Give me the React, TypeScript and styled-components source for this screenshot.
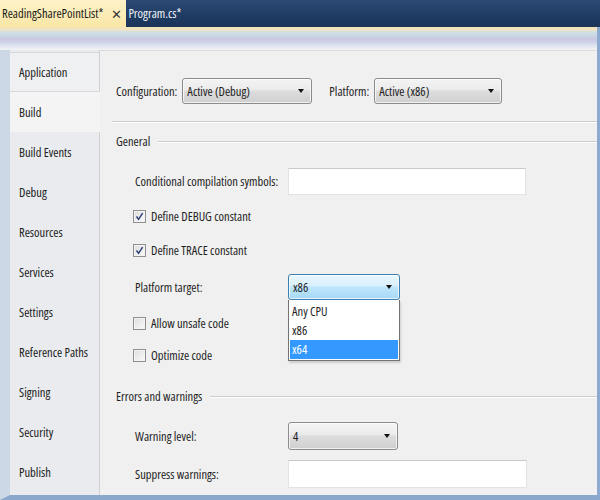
import React from "react";
import styled, { createGlobalStyle } from "styled-components";

const Global = createGlobalStyle`
  html, body { margin: 0; padding: 0; }
  body { width: 600px; height: 500px; overflow: hidden; background: #f0f0f0; }
  * { box-sizing: border-box; }
`;

const Root = styled.div`
  width: 600px;
  height: 500px;
  display: flex;
  flex-direction: column;
  font-family: "Open Sans", "Liberation Sans", sans-serif;
  font-stretch: 84%;
  font-size: 12.5px;
  color: #1e1e1e;
  background: #f0f0f0;
`;

const TabBar = styled.div`
  height: 27px;
  display: flex;
  align-items: stretch;
  background: linear-gradient(#2b4a74, #1f3b62 60%, #1b3458);
  flex: none;
`;

const DocTab = styled.div<{ $active?: boolean }>`
  display: flex;
  align-items: center;
  gap: 6px;
  padding: 0 ${(p) => (p.$active ? "4px" : "6px")} 0 2px;
  background: ${(p) => (p.$active ? "linear-gradient(#fdf2c9, #f9e6a6)" : "transparent")};
  color: ${(p) => (p.$active ? "#1a1a1a" : "#f2f4f8")};
  font-size: 12.5px;
  white-space: nowrap;
`;

const Close = styled.span`
  font-size: 13px;
  color: #3a3a3a;
  margin-left: 2px;
`;

const Strip = styled.div`
  height: 23px;
  flex: none;
  background: linear-gradient(
    #f2e3b8 0px,
    #efe3c4 3px,
    #cfdfe2 5px,
    #c9d6e4 9px,
    #cac6e2 12px,
    #cfd6ea 16px,
    #dfe6ef 19px,
    #e9edf2 21px,
    #f4f4f4 23px
  );
  border-right: 3px solid #8daad0;
`;

const Body = styled.div`
  flex: 1;
  display: flex;
  min-height: 0;
  border-left: 10px solid #cdd8e6;
  border-right: 3px solid #8daad0;
  border-bottom: 5px solid #8aa7cc;
`;

const Nav = styled.div`
  width: 90px;
  flex: none;
  background: #e9ebee;
  border-right: 1px solid #cfd1d4;
  display: flex;
  flex-direction: column;
  padding-top: 2px;
`;

const NavItem = styled.div<{ $selected?: boolean; $boxed?: boolean }>`
  height: 40px;
  display: flex;
  align-items: center;
  padding-left: 9px;
  color: #222;
  background: ${(p) => (p.$selected ? "#f4f4f4" : p.$boxed ? "#eff0f1" : "transparent")};
  border-top: 1px solid ${(p) => (p.$boxed ? "#d6d8db" : "transparent")};
  border-bottom: 1px solid ${(p) => (p.$boxed ? "#d6d8db" : "transparent")};
  margin-right: ${(p) => (p.$selected ? "-1px" : "0")};
`;

const Content = styled.div`
  flex: 1;
  display: flex;
  flex-direction: column;
  background: #f0f0f0;
  padding-top: 2px;
  border-top: 1px solid #dcdcdc;
`;

const TopRow = styled.div`
  display: flex;
  align-items: center;
  height: 26px;
  margin-top: 25px;
  padding-left: 16px;
`;

const TopLabel = styled.span<{ $ml?: number }>`
  margin-right: 5px;
  margin-left: ${(p) => p.$ml ?? 0}px;
`;

const Select = styled.div<{ $w: number; $focus?: boolean; $h?: number }>`
  position: relative;
  width: ${(p) => p.$w}px;
  height: ${(p) => p.$h ?? 26}px;
  border: 1px solid ${(p) => (p.$focus ? "#3c7fb1" : "#8b8b8b")};
  border-radius: 3px;
  background: ${(p) =>
    p.$focus
      ? "linear-gradient(#eaf6fd 0%, #d9f0fc 45%, #bee6fd 50%, #a7d9f5 100%)"
      : "linear-gradient(#f4f4f4 0%, #ebebeb 45%, #dddddd 50%, #cfcfcf 100%)"};
  display: flex;
  align-items: center;
  padding-left: 4px;
  box-shadow: inset 0 0 0 1px rgba(255, 255, 255, 0.7);
`;

const Arrow = styled.span`
  position: absolute;
  right: 7px;
  top: 50%;
  margin-top: -2px;
  width: 0;
  height: 0;
  border-left: 3.5px solid transparent;
  border-right: 3.5px solid transparent;
  border-top: 4px solid #111;
`;

const Separator = styled.div<{ $mt: number }>`
  height: 2px;
  margin-top: ${(p) => p.$mt}px;
  margin-left: 12px;
  border-top: 1px solid #cdcdcd;
  border-bottom: 1px solid #ffffff;
`;

const Header = styled.div<{ $mt: number }>`
  display: flex;
  align-items: center;
  height: 20px;
  margin-top: ${(p) => p.$mt}px;
  padding-left: 16px;
  gap: 8px;
`;

const HeaderLine = styled.div`
  flex: 1;
  height: 2px;
  border-top: 1px solid #cdcdcd;
  border-bottom: 1px solid #ffffff;
  margin-top: 1px;
`;

const Row = styled.div<{ $mt: number; $h: number }>`
  position: relative;
  display: flex;
  align-items: center;
  height: ${(p) => p.$h}px;
  margin-top: ${(p) => p.$mt}px;
  padding-left: 35px;
`;

const Label = styled.span`
  width: 153px;
  flex: none;
`;

const TextInput = styled.div<{ $w: number; $h: number }>`
  width: ${(p) => p.$w}px;
  height: ${(p) => p.$h}px;
  background: #ffffff;
  border: 1px solid #e2e3e4;
  border-top-color: #c9c9c9;
`;

const Box = styled.span`
  width: 13px;
  height: 13px;
  margin-left: -2px;
  margin-right: 5px;
  border: 1px solid #8e8f8f;
  background: linear-gradient(135deg, #dcdcdc, #fbfbfb);
  display: inline-flex;
  align-items: center;
  justify-content: center;
  flex: none;
  box-shadow: inset 0 0 0 1px #f4f4f4;
`;

const List = styled.div`
  position: absolute;
  left: 188px;
  top: 100%;
  width: 112px;
  background: #ffffff;
  border: 1px solid #737373;
  border-top: none;
  padding: 2px 1px 1px;
  z-index: 2;
  box-shadow: 1px 2px 2px rgba(0, 0, 0, 0.15);
`;

const Option = styled.div<{ $hl?: boolean }>`
  height: 19px;
  display: flex;
  align-items: center;
  padding-left: 2px;
  background: ${(p) => (p.$hl ? "#3399ff" : "transparent")};
  color: ${(p) => (p.$hl ? "#ffffff" : "#1e1e1e")};
`;

const Check = () => (
  <svg width="9" height="9" viewBox="0 0 9 9">
    <path d="M1.5 4.5 L3.6 7.3 L7.6 1.2" fill="none" stroke="#2b3f75" strokeWidth="1.5" />
  </svg>
);

const navItems = [
  "Application",
  "Build",
  "Build Events",
  "Debug",
  "Resources",
  "Services",
  "Settings",
  "Reference Paths",
  "Signing",
  "Security",
  "Publish",
];

export default function App() {
  return (
    <Root>
      <Global />
      <TabBar>
        <DocTab $active>
          ReadingSharePointList*<Close>✕</Close>
        </DocTab>
        <DocTab>Program.cs*</DocTab>
      </TabBar>
      <Strip />
      <Body>
        <Nav>
          {navItems.map((n) => (
            <NavItem key={n} $selected={n === "Build"} $boxed={n === "Application"}>
              {n}
            </NavItem>
          ))}
        </Nav>
        <Content>
          <TopRow>
            <TopLabel>Configuration:</TopLabel>
            <Select $w={130}>
              Active (Debug)
              <Arrow />
            </Select>
            <TopLabel $ml={17}>Platform:</TopLabel>
            <Select $w={128}>
              Active (x86)
              <Arrow />
            </Select>
          </TopRow>
          <Separator $mt={17} />
          <Header $mt={8}>
            General
            <HeaderLine />
          </Header>
          <Row $mt={17} $h={27}>
            <Label>Conditional compilation symbols:</Label>
            <TextInput $w={238} $h={27} />
          </Row>
          <Row $mt={9} $h={24}>
            <Box>
              <Check />
            </Box>
            Define DEBUG constant
          </Row>
          <Row $mt={10} $h={24}>
            <Box>
              <Check />
            </Box>
            Define TRACE constant
          </Row>
          <Row $mt={12} $h={26}>
            <Label>Platform target:</Label>
            <Select $w={112} $focus>
              x86
              <Arrow />
            </Select>
            <List>
              <Option>Any CPU</Option>
              <Option>x86</Option>
              <Option $hl>x64</Option>
            </List>
          </Row>
          <Row $mt={11} $h={24}>
            <Box />
            Allow unsafe code
          </Row>
          <Row $mt={8} $h={24}>
            <Box />
            Optimize code
          </Row>
          <Header $mt={19}>
            Errors and warnings
            <HeaderLine />
          </Header>
          <Row $mt={16} $h={28}>
            <Label>Warning level:</Label>
            <Select $w={110} $h={28}>
              4
              <Arrow />
            </Select>
          </Row>
          <Row $mt={10} $h={28}>
            <Label>Suppress warnings:</Label>
            <TextInput $w={239} $h={28} />
          </Row>
        </Content>
      </Body>
    </Root>
  );
}
